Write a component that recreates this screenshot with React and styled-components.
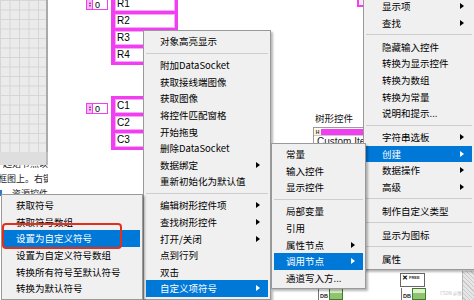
import React from "react";
import styled, { createGlobalStyle } from "styled-components";

const GlobalStyle = createGlobalStyle`
  html, body { margin: 0; padding: 0; background: #fff; }
  body { font-family: "Noto Sans CJK SC", "Noto Sans", sans-serif; }
`;

const PINK = "#f03ef0";

const Screen = styled.div`
  position: relative;
  width: 474px;
  height: 300px;
  overflow: hidden;
  display: flex;
  background: #fff;
`;

/* ---------- left strip: block-diagram grid + help text ---------- */
const LeftStrip = styled.div`
  width: 48px;
  flex: none;
  display: flex;
  flex-direction: column;
`;

const GridArea = styled.div`
  height: 152px;
  box-sizing: border-box;
  border-right: 2px solid #a9a9a9;
  background-color: #ebebeb;
  background-image: linear-gradient(to right, #d5d5d5 1px, transparent 1px),
    linear-gradient(to bottom, #d5d5d5 1px, transparent 1px);
  background-size: 9.5px 9.5px;
`;

const ScrollBand = styled.div`
  height: 13px;
  box-sizing: border-box;
  border-right: 2px solid #bcbcbc;
  background: #dedede;
`;

const NoteArea = styled.div`
  flex: 1;
  overflow: hidden;
  background: #fff;
  font-family: "Noto Sans CJK SC", sans-serif;
  font-size: 9px;
  line-height: 15px;
  color: #222;
  white-space: nowrap;
`;

const NoteLine = styled.div`
  display: flex;
  align-items: center;
  margin-top: ${(p) => p.$mt || 0}px;
  padding-left: ${(p) => p.$indent || 0}px;
  margin-left: ${(p) => p.$ml || 0}px;
`;

const NoteMark = styled.span`
  width: 3px;
  height: 6px;
  background: #2a7ad2;
  margin-right: 10px;
`;

/* ---------- front panel canvas ---------- */
const Canvas = styled.div`
  position: relative;
  flex: 1;
  background: #fff;
`;

const IndexBox = styled.div`
  position: absolute;
  left: ${(p) => p.$x}px;
  top: ${(p) => p.$y}px;
  width: 22px;
  height: 11px;
  box-sizing: border-box;
  border: 1.5px solid ${PINK};
  background: #fff;
  display: flex;
  align-items: center;
  font: 9px "Liberation Sans", sans-serif;
  color: #000;
`;

const Spinner = styled.div`
  align-self: stretch;
  width: 5px;
  background: #f8b8f8;
  border-right: 1px solid ${PINK};
  display: flex;
  flex-direction: column;
  align-items: center;
  justify-content: center;
  gap: 1px;
`;

const SpinTri = styled.span`
  width: 0;
  height: 0;
  border-left: 1.5px solid transparent;
  border-right: 1.5px solid transparent;
  ${(p) => (p.$up ? "border-bottom" : "border-top")}: 2px solid #7a1c7a;
`;

const IndexValue = styled.span`
  padding-left: 2px;
  line-height: 8px;
`;

const ArrayFrame = styled.div`
  position: absolute;
  left: ${(p) => p.$x}px;
  top: ${(p) => p.$y}px;
  width: 67px;
  box-sizing: border-box;
  padding: 3px 3px 3px 4px;
  background: ${PINK};
  display: flex;
  flex-direction: column;
  gap: 3px;
`;

const ArrayCell = styled.div`
  height: 14px;
  box-sizing: border-box;
  background: #fff;
  border: 1px solid #f9a8f9;
  padding-left: 1px;
  font: 10px "Liberation Sans", Arial, sans-serif;
  line-height: 12px;
  color: #000;
`;

const PinkBit = styled.div`
  position: absolute;
  left: ${(p) => p.$x}px;
  top: ${(p) => p.$y}px;
  width: 12px;
  height: 12px;
  box-sizing: border-box;
  border: 2px solid ${PINK};
  background: #fde6fd;
`;

const TreeLabel = styled.div`
  position: absolute;
  left: ${(p) => p.$x}px;
  top: ${(p) => p.$y}px;
  font-family: "Noto Sans CJK SC", sans-serif;
  font-size: 9.5px;
  line-height: 14px;
  color: #111;
`;

const TreeBox = styled.div`
  position: absolute;
  left: ${(p) => p.$x}px;
  top: ${(p) => p.$y}px;
  width: 120px;
  height: 40px;
  box-sizing: border-box;
  border: 1px solid #9c9c9c;
  background: #fff;
  display: flex;
  flex-direction: column;
`;

const TreeHeader = styled.div`
  display: flex;
  height: 6px;
  margin-top: 1px;
  border-bottom: 1px solid #c8c8c8;
`;

const TreeHeaderIcon = styled.span`
  width: 7px;
  font: bold 5px "Liberation Sans", sans-serif;
  line-height: 6px;
  text-align: center;
  color: #333;
  background: #fff6d8;
`;

const TreeHeaderBar = styled.span`
  flex: 1;
  background: ${PINK};
`;

const TreeRow = styled.div`
  padding-left: 3px;
  font: 10px "Liberation Sans", Arial, sans-serif;
  line-height: 12px;
  color: #222;
  white-space: nowrap;
`;

const FreeIcon = styled.div`
  position: absolute;
  left: ${(p) => p.$x}px;
  top: ${(p) => p.$y}px;
  width: 25px;
  height: 14px;
  box-sizing: border-box;
  border: 1px solid #666;
  background: #fff;
  display: flex;
  align-items: flex-start;
  gap: 1px;
  padding: 1px;
`;

const FreeX = styled.span`
  font: bold 7px "Liberation Sans", sans-serif;
  line-height: 6px;
  color: #000;
`;

const FreeText = styled.span`
  font: bold 4px "Liberation Sans", sans-serif;
  line-height: 5px;
  color: #333;
`;

const DBIcon = styled.div`
  position: absolute;
  left: ${(p) => p.$x}px;
  top: ${(p) => p.$y}px;
  display: flex;
  align-items: flex-end;
  gap: 1px;
  padding-left: 1px;
  border-left: 1px solid #777;
`;

const DBText = styled.span`
  font: bold 5.5px "Liberation Sans", sans-serif;
  line-height: 7px;
  color: #222;
`;

const DBGlyph = styled.span`
  width: 14px;
  height: 12px;
  box-sizing: border-box;
  border: 1px solid #3f7d2c;
  background: linear-gradient(#dff0cf 0 40%, #8fc46f 40% 100%);
`;

const RightBlob = styled.div`
  position: absolute;
  left: ${(p) => p.$x}px;
  top: ${(p) => p.$y}px;
  width: 14px;
  height: 30px;
  border-left: 1px solid #b5b5b5;
  background: repeating-linear-gradient(
    45deg,
    #e6e6e6 0 2px,
    #c9c9c9 2px 3px
  );
`;

const Watermark = styled.div`
  position: absolute;
  left: ${(p) => p.$x}px;
  top: ${(p) => p.$y}px;
  font: 4.5px "Noto Sans CJK SC", sans-serif;
  color: #c2c2c2;
  white-space: nowrap;
`;

/* ---------- context menus (overlays) ---------- */
const Menu = styled.div`
  position: absolute;
  left: ${(p) => p.$x}px;
  top: ${(p) => p.$y}px;
  width: ${(p) => p.$w}px;
  box-sizing: border-box;
  padding: 2px 0 ${(p) => p.$pb ?? 2}px;
  background: #f0f0f0;
  border: 1px solid #999;
  box-shadow: 2px 2px 2px rgba(0, 0, 0, 0.28);
  font-family: "Noto Sans CJK SC", "Noto Sans", sans-serif;
  font-size: 9.5px;
  z-index: ${(p) => p.$z};
`;

const MenuItem = styled.div`
  display: flex;
  align-items: center;
  height: 16.6px;
  margin: 0 2px;
  padding: 0 8px 0 ${(p) => p.$padL}px;
  color: ${(p) => (p.$active ? "#fff" : "#000")};
  background: ${(p) => (p.$active ? "#0078d7" : "transparent")};
  white-space: nowrap;
`;

const Arrow = styled.span`
  margin-left: auto;
  width: 0;
  height: 0;
  border-left: 4px solid ${(p) => (p.$active ? "#fff" : "#000")};
  border-top: 3.5px solid transparent;
  border-bottom: 3.5px solid transparent;
`;

const Separator = styled.div`
  margin: 3px 2px 3.4px;
  border-top: 1px solid #cdcdcd;
`;

const Annotation = styled.div`
  position: absolute;
  left: 2px;
  top: 223px;
  width: 120px;
  height: 26px;
  box-sizing: border-box;
  border: 2px solid #e2301f;
  border-radius: 4px;
  z-index: 30;
`;

const SEP = "sep";

const menuA = [
  { t: "对象高亮显示" },
  SEP,
  { t: "附加DataSocket" },
  { t: "获取接线端图像" },
  { t: "获取图像" },
  { t: "将控件匹配窗格" },
  { t: "开始拖曳" },
  { t: "删除DataSocket" },
  { t: "数据绑定", sub: true },
  { t: "重新初始化为默认值" },
  SEP,
  { t: "编辑树形控件项", sub: true },
  { t: "查找树形控件", sub: true },
  { t: "打开/关闭", sub: true },
  { t: "点到行列" },
  { t: "双击" },
  { t: "自定义项符号", sub: true, active: true },
];

const menuC = [
  { t: "获取符号" },
  { t: "获取符号数组" },
  { t: "设置为自定义符号", active: true },
  { t: "设置为自定义符号数组" },
  { t: "转换所有符号至默认符号" },
  { t: "转换为默认符号" },
];

const menuD = [
  { t: "常量" },
  { t: "输入控件" },
  { t: "显示控件" },
  SEP,
  { t: "局部变量" },
  { t: "引用" },
  { t: "属性节点", sub: true },
  { t: "调用节点", sub: true, active: true },
  { t: "通道写入方..." },
];

const menuE = [
  { t: "显示项", sub: true },
  { t: "查找", sub: true },
  SEP,
  { t: "隐藏输入控件" },
  { t: "转换为显示控件" },
  { t: "转换为数组" },
  { t: "转换为常量" },
  { t: "说明和提示..." },
  SEP,
  { t: "字符串选板", sub: true },
  { t: "创建", sub: true, active: true },
  { t: "数据操作", sub: true },
  { t: "高级", sub: true },
  SEP,
  { t: "制作自定义类型" },
  SEP,
  { t: "显示为图标" },
  SEP,
  { t: "属性" },
];

function ContextMenu({ items, x, y, w, z, padL, pb }) {
  return (
    <Menu $x={x} $y={y} $w={w} $z={z} $pb={pb}>
      {items.map((it, i) =>
        it === SEP ? (
          <Separator key={i} />
        ) : (
          <MenuItem key={i} $padL={padL} $active={it.active}>
            {it.t}
            {it.sub && <Arrow $active={it.active} />}
          </MenuItem>
        )
      )}
    </Menu>
  );
}

function Index({ x, y }) {
  return (
    <IndexBox $x={x} $y={y}>
      <Spinner>
        <SpinTri $up />
        <SpinTri />
      </Spinner>
      <IndexValue>0</IndexValue>
    </IndexBox>
  );
}

function StringArray({ x, y, cells }) {
  return (
    <ArrayFrame $x={x} $y={y}>
      {cells.map((c) => (
        <ArrayCell key={c}>{c}</ArrayCell>
      ))}
    </ArrayFrame>
  );
}

export default function App() {
  return (
    <>
      <GlobalStyle />
      <Screen>
        <LeftStrip>
          <GridArea />
          <ScrollBand />
          <NoteArea>
            <NoteLine $mt={-9.5} $indent={3}>起始节点以块状</NoteLine>
            <NoteLine $ml={-2}>框图上。右键</NoteLine>
            <NoteLine>
              <NoteMark />
              资源控件
            </NoteLine>
          </NoteArea>
        </LeftStrip>

        <Canvas>
          <Index x={38} y={-1} />
          <StringArray x={63} y={-6} cells={["R1", "R2", "R3", "R4"]} />
          <Index x={38} y={103} />
          <StringArray x={63} y={96} cells={["C1", "C2", "C3"]} />
          <PinkBit $x={309} $y={-5} />
          <TreeLabel $x={267} $y={111}>树形控件</TreeLabel>
          <TreeBox $x={265} $y={127}>
            <TreeHeader>
              <TreeHeaderIcon>H</TreeHeaderIcon>
              <TreeHeaderBar />
            </TreeHeader>
            <TreeRow>Custom Item</TreeRow>
          </TreeBox>
          <DBIcon $x={270} $y={288}>
            <DBText>DB</DBText>
            <DBGlyph />
          </DBIcon>
          <FreeIcon $x={352} $y={273}>
            <FreeX>✕</FreeX>
            <FreeText>FREE</FreeText>
          </FreeIcon>
          <DBIcon $x={353} $y={288}>
            <DBText>DB</DBText>
            <DBGlyph />
          </DBIcon>
          <Watermark $x={392} $y={290}>CSDN @博主</Watermark>
          <RightBlob $x={414} $y={271} />
        </Canvas>

        <ContextMenu items={menuA} x={143} y={30} w={128} z={10} padL={14} />
        <ContextMenu items={menuC} x={1} y={194} w={142} z={12} padL={12} />
        <ContextMenu items={menuE} x={363} y={-5} w={112} z={14} padL={16} />
        <ContextMenu items={menuD} x={271} y={143} w={95} z={16} padL={12} />
        <Annotation />
      </Screen>
    </>
  );
}
